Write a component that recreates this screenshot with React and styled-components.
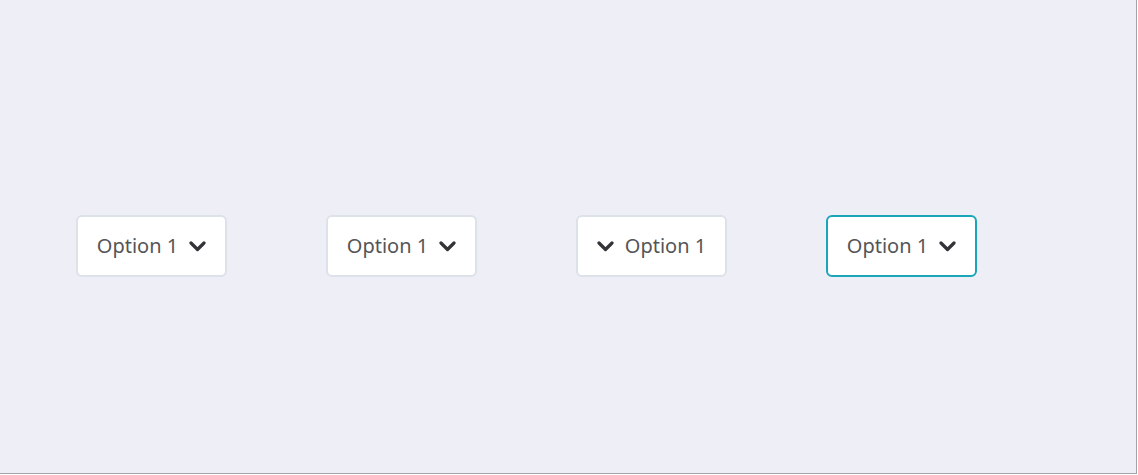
import React from 'react'
import styled, { createGlobalStyle } from 'styled-components'

const GlobalStyle = createGlobalStyle`
    html, body {
        margin: 0;
        padding: 0;
        background: #ffffff;
    }
`

const Frame = styled.div`
    box-sizing: border-box;
    width: 1137px;
    height: 474px;
    background: #edeef6;
    border-right: 1px solid #a3a3ab;
    border-bottom: 1px solid #a3a3ab;
    display: flex;
    align-items: flex-start;
    padding: 215px 0 0 76px;
    gap: 99px;
    font-family: "Noto Sans", sans-serif;
`

const Select = styled.button`
    box-sizing: border-box;
    width: 151px;
    height: 62px;
    display: flex;
    align-items: center;
    justify-content: center;
    flex-direction: ${p => (p.$iconFirst ? 'row-reverse' : 'row')};
    gap: 11px;
    padding: 0;
    background: #ffffff;
    border: 2px solid ${p => (p.$focused ? '#1ba5b9' : '#dde1ea')};
    border-radius: 6px;
    color: #555558;
    font-family: inherit;
    font-size: 20px;
    cursor: pointer;
`

const Label = styled.span`
    line-height: 1;
`

const Chevron = () => (
    <svg width="17" height="12" viewBox="0 0 17 12" fill="none">
        <path d="M2 3l6.5 6.5L15 3" stroke="#333338" strokeWidth="3.2" strokeLinecap="round" strokeLinejoin="round" />
    </svg>
)

const variants = [
    { iconFirst: false, focused: false },
    { iconFirst: false, focused: false },
    { iconFirst: true, focused: false },
    { iconFirst: false, focused: true },
]

const App = () => (
    <>
        <GlobalStyle />
        <Frame>
            {variants.map((v, i) => (
                <Select key={i} $iconFirst={v.iconFirst} $focused={v.focused}>
                    <Label>Option 1</Label>
                    <Chevron />
                </Select>
            ))}
        </Frame>
    </>
)

export default App
